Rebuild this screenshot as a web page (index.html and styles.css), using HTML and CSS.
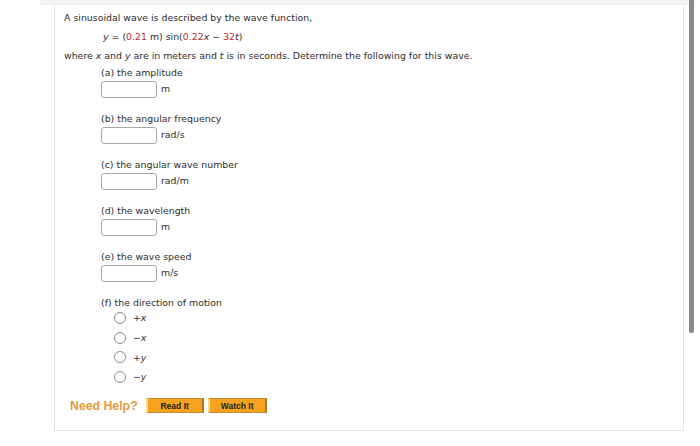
FILE: index.html
```html
<!DOCTYPE html>
<html>
<head>
<meta charset="utf-8">
<link rel="stylesheet" href="styles.css">
</head>
<body>
<div class="topband"></div>
<div class="panel">
  <p class="line">A sinusoidal wave is described by the wave function,</p>
  <p class="line eq"><i>y</i> = (<span class="red">0.21</span> m) sin(<span class="red">0.22</span><i>x</i> &minus; <span class="red">32</span><i>t</i>)</p>
  <p class="line">where <i>x</i> and <i>y</i> are in meters and <i>t</i> is in seconds. Determine the following for this wave.</p>
  <div class="questions">
    <div class="q">
      <div class="qlabel">(a) the amplitude</div>
      <div class="answer"><span class="box"></span><span class="unit">m</span></div>
    </div>
    <div class="q">
      <div class="qlabel">(b) the angular frequency</div>
      <div class="answer"><span class="box"></span><span class="unit">rad/s</span></div>
    </div>
    <div class="q">
      <div class="qlabel">(c) the angular wave number</div>
      <div class="answer"><span class="box"></span><span class="unit">rad/m</span></div>
    </div>
    <div class="q">
      <div class="qlabel">(d) the wavelength</div>
      <div class="answer"><span class="box"></span><span class="unit">m</span></div>
    </div>
    <div class="q">
      <div class="qlabel">(e) the wave speed</div>
      <div class="answer"><span class="box"></span><span class="unit">m/s</span></div>
    </div>
    <div class="q qf">
      <div class="qlabel">(f) the direction of motion</div>
      <div class="radios">
        <div class="radio"><span class="circle"></span><span>+<i>x</i></span></div>
        <div class="radio"><span class="circle"></span><span>&minus;<i>x</i></span></div>
        <div class="radio"><span class="circle"></span><span>+<i>y</i></span></div>
        <div class="radio"><span class="circle"></span><span>&minus;<i>y</i></span></div>
      </div>
    </div>
  </div>
  <div class="help">
    <span class="needhelp">Need Help?</span>
    <span class="btn btn-read">Read It</span>
    <span class="btn btn-watch">Watch It</span>
  </div>
</div>
<div class="scrollbar"></div>
</body>
</html>
```
FILE: styles.css
```css
html, body {
  margin: 0;
  padding: 0;
  background: #ffffff;
}
body {
  width: 700px;
  height: 446px;
  overflow: hidden;
  font-family: "DejaVu Sans", Verdana, sans-serif;
  font-size: 9.4px;
  color: #2e2e2e;
  position: relative;
}
.topband {
  height: 4px;
  background: #f4f4f4;
  border-bottom: 1px solid #ececec;
  margin-left: 40px;
  width: 650px;
}
.panel {
  margin-left: 54px;
  width: 630px;
  height: 426px;
  box-sizing: border-box;
  border-left: 1px solid #e2e2e2;
  border-right: 1px solid #e2e2e2;
  border-bottom: 1px solid #e2e2e2;
  padding: 3px 0 0 9px;
}
.line {
  margin: 0;
  height: 19px;
  line-height: 19px;
  white-space: nowrap;
}
.eq {
  padding-left: 39px;
}
.red {
  color: #b8322a;
}
.questions {
  padding-left: 37px;
}
.q {
  height: 46px;
}
.qlabel {
  height: 15px;
  line-height: 15px;
}
.answer {
  display: flex;
  align-items: center;
  gap: 4px;
  height: 18px;
}
.box {
  display: inline-block;
  width: 54px;
  height: 15px;
  border: 1px solid #a9a9a9;
  border-radius: 3px;
  background: #fff;
}
.unit {
  line-height: 18px;
}
.qf {
  height: auto;
}
.radios {
  padding-left: 13px;
  margin-top: -2px;
}
.radio {
  display: flex;
  align-items: center;
  gap: 7px;
  height: 19.7px;
}
.circle {
  display: inline-block;
  width: 10px;
  height: 10px;
  border: 1px solid #8c8c8c;
  border-radius: 50%;
  background: #fff;
}
.help {
  display: flex;
  align-items: center;
  height: 18px;
  margin-top: 10px;
  padding-left: 6px;
}
.needhelp {
  font-family: "Liberation Sans", Arial, sans-serif;
  font-weight: bold;
  font-size: 12.3px;
  color: #e49a3c;
  margin-right: 8px;
}
.btn {
  display: inline-flex;
  align-items: center;
  justify-content: center;
  box-sizing: border-box;
  height: 15px;
  background: #f5a31f;
  border: 1px solid #c98a32;
  border-left: 2px solid #fcd896;
  border-right: 2px solid #b5752a;
  font-family: "Liberation Sans", Arial, sans-serif;
  font-weight: bold;
  font-size: 8.5px;
  color: #222;
  margin-right: 4px;
}
.btn-read {
  width: 58px;
}
.btn-watch {
  width: 59px;
}
.scrollbar {
  position: absolute;
  left: 689px;
  top: 0;
  width: 5px;
  height: 333px;
  background: #8a8a8a;
  border-radius: 0 0 3px 3px;
}
```
